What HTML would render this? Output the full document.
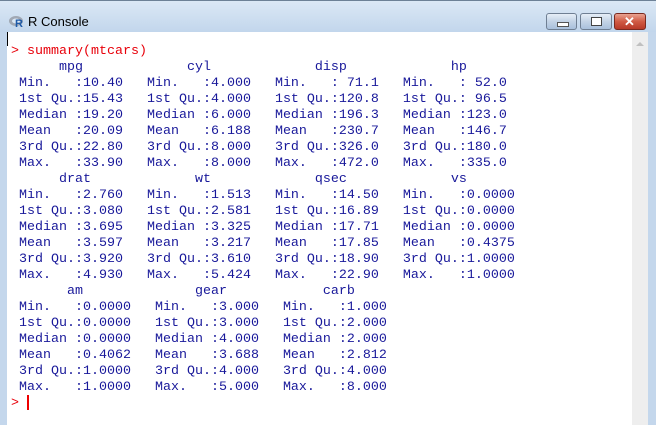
<!DOCTYPE html>
<html><head><style>
body{margin:0;width:656px;height:425px;overflow:hidden;background:#c4d7ec;font-family:"Liberation Sans",sans-serif;position:relative}
.title{position:absolute;left:0;top:0;width:656px;height:32px;background:linear-gradient(#dbe8f5,#c2d6ec);border-top:1px solid #6d8196;box-sizing:border-box}
.title span{position:absolute;left:28px;top:13px;font-size:13px;color:#000}
.logo{position:absolute;left:9px;top:14px;width:16px;height:13px}
.btn{position:absolute;top:12px;height:17px;border:1px solid #6f7f93;border-radius:3px;background:linear-gradient(#e6eef7,#c3d3e6 50%,#a9c0dc);box-sizing:border-box}
.content{position:absolute;left:7px;top:32px;width:625px;height:393px;background:#fff}
.sb{position:absolute;left:632px;top:32px;width:16px;height:393px;background:#eeeeee}
pre{position:absolute;left:11px;top:44px;margin:0;font-family:"Liberation Mono",monospace;font-size:13.33px;line-height:16px;color:#18189a}
.r{color:#e8000a}
.cur{position:absolute;left:27px;top:395px;width:2px;height:15px;background:#e00}
</style></head><body>
<div class="title">
<svg class="logo" viewBox="0 0 16 13"><ellipse cx="7" cy="6" rx="7" ry="5" fill="#a0a8b4"/><ellipse cx="7" cy="6" rx="4" ry="2.5" fill="#dbe8f5"/><text x="6" y="12" font-size="11" font-weight="bold" fill="#1e5aa8" font-family="Liberation Sans">R</text></svg>
<span>R Console</span>
<div class="btn" style="left:546px;width:31px"><div style="position:absolute;left:10px;top:8px;width:10px;height:3px;background:#fff;border:1px solid #555"></div></div>
<div class="btn" style="left:580px;width:32px"><div style="position:absolute;left:10px;top:3px;width:9px;height:7px;border:1px solid #444;background:#fff"></div></div>
<div class="btn" style="left:614px;width:32px;border-color:#7a2a20;background:linear-gradient(#e9a392,#d05a44 50%,#b83a28)"><div style="position:absolute;left:9px;top:0;color:#fff;font-weight:bold;font-size:13px;line-height:15px">✕</div></div>
</div>
<div class="content"></div>
<div style="position:absolute;left:7px;top:32px;width:1px;height:14px;background:#000"></div>
<div class="sb"><div style="position:absolute;left:4px;top:10px;width:0;height:0;border-left:4px solid transparent;border-right:4px solid transparent;border-bottom:4px solid #c0c0c0"></div></div>
<pre><span class="r">&gt; summary(mtcars)</span>
      mpg             cyl             disp             hp       
 Min.   :10.40   Min.   :4.000   Min.   : 71.1   Min.   : 52.0  
 1st Qu.:15.43   1st Qu.:4.000   1st Qu.:120.8   1st Qu.: 96.5  
 Median :19.20   Median :6.000   Median :196.3   Median :123.0  
 Mean   :20.09   Mean   :6.188   Mean   :230.7   Mean   :146.7  
 3rd Qu.:22.80   3rd Qu.:8.000   3rd Qu.:326.0   3rd Qu.:180.0  
 Max.   :33.90   Max.   :8.000   Max.   :472.0   Max.   :335.0  
      drat             wt             qsec             vs        
 Min.   :2.760   Min.   :1.513   Min.   :14.50   Min.   :0.0000  
 1st Qu.:3.080   1st Qu.:2.581   1st Qu.:16.89   1st Qu.:0.0000  
 Median :3.695   Median :3.325   Median :17.71   Median :0.0000  
 Mean   :3.597   Mean   :3.217   Mean   :17.85   Mean   :0.4375  
 3rd Qu.:3.920   3rd Qu.:3.610   3rd Qu.:18.90   3rd Qu.:1.0000  
 Max.   :4.930   Max.   :5.424   Max.   :22.90   Max.   :1.0000  
       am              gear            carb      
 Min.   :0.0000   Min.   :3.000   Min.   :1.000  
 1st Qu.:0.0000   1st Qu.:3.000   1st Qu.:2.000  
 Median :0.0000   Median :4.000   Median :2.000  
 Mean   :0.4062   Mean   :3.688   Mean   :2.812  
 3rd Qu.:1.0000   3rd Qu.:4.000   3rd Qu.:4.000  
 Max.   :1.0000   Max.   :5.000   Max.   :8.000  
<span class="r">&gt; </span></pre>
<div class="cur"></div>
</body></html>
